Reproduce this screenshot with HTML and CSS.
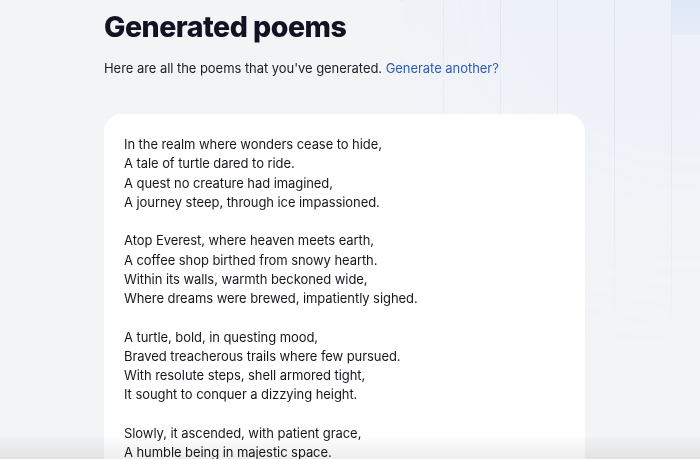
FILE: index.html
```html
<!DOCTYPE html>
<html lang="en">
<head>
<meta charset="utf-8">
<title>Generated poems</title>
<link rel="stylesheet" href="styles.css">
</head>
<body>
<div class="bg-grid" aria-hidden="true"><span class="bg-tile"></span></div>
<main class="page">
  <h1 class="title">Generated poems</h1>
  <p class="intro">Here are all the poems that you've generated. <a class="link" href="#">Generate another?</a></p>
  <section class="card">
    <p class="stanza">In the realm where wonders cease to hide,<br>A tale of turtle dared to ride.<br>A quest no creature had imagined,<br>A journey steep, through ice impassioned.</p>
    <p class="stanza">Atop Everest, where heaven meets earth,<br>A coffee shop birthed from snowy hearth.<br>Within its walls, warmth beckoned wide,<br>Where dreams were brewed, impatiently sighed.</p>
    <p class="stanza">A turtle, bold, in questing mood,<br>Braved treacherous trails where few pursued.<br>With resolute steps, shell armored tight,<br>It sought to conquer a dizzying height.</p>
    <p class="stanza">Slowly, it ascended, with patient grace,<br>A humble being in majestic space.</p>
  </section>
</main>
<div class="bottom-fade" aria-hidden="true"></div>
</body>
</html>
```
FILE: styles.css
```css
* { box-sizing: border-box; }
html, body { margin: 0; padding: 0; }
body {
  background: #f3f4f6;
  font-family: Inter, "Noto Sans", sans-serif;
  color: #1f2937;
  overflow: hidden;
  height: 459px;
}
.bg-grid {
  position: fixed;
  top: 0;
  right: 0;
  width: 300px;
  height: 340px;
  background:
    linear-gradient(to right, rgba(205,214,232,0.4) 1px, transparent 1px) 43px 0 / 57px 100%,
    linear-gradient(-8deg, transparent 0 calc(100% - 1px), rgba(225,232,244,0.85) calc(100% - 1px)) 0 0 / 100% 62px,
    linear-gradient(180deg, #edf1f8 0%, #eff2f7 55%, #f3f4f6 100%);
  -webkit-mask-image: radial-gradient(ellipse 150% 110% at 100% 0%, #000 40%, transparent 95%);
  mask-image: radial-gradient(ellipse 150% 110% at 100% 0%, #000 40%, transparent 95%);
}
.bg-tile {
  position: absolute;
  top: 0;
  right: 0;
  width: 28px;
  height: 35px;
  background: linear-gradient(180deg, #dfe8f7, #e6edf8);
}
.page {
  position: relative;
  width: 481px;
  margin-left: 104px;
  padding-top: 9px;
}
.title {
  margin: 0;
  font-size: 28.5px;
  line-height: 36px;
  font-weight: 800;
  color: #111322;
  letter-spacing: -0.5px;
}
.intro {
  margin: 11px 0 0;
  font-size: 13px;
  line-height: 24px;
  letter-spacing: -0.05px;
  color: #1a1d26;
}
.link {
  color: #2d5db5;
  text-decoration: none;
}
.card {
  margin-top: 34px;
  background: #ffffff;
  border-radius: 18px;
  padding: 21px 20px 20px;
}
.stanza {
  margin: 0 0 19.25px;
  font-size: 13px;
  line-height: 19.25px;
  letter-spacing: -0.07px;
  color: #16181f;
}
.bottom-fade {
  position: fixed;
  left: 0;
  right: 0;
  bottom: 0;
  height: 24px;
  background: linear-gradient(180deg, rgba(0,0,0,0) 0%, rgba(0,0,0,0.07) 100%);
}
```
